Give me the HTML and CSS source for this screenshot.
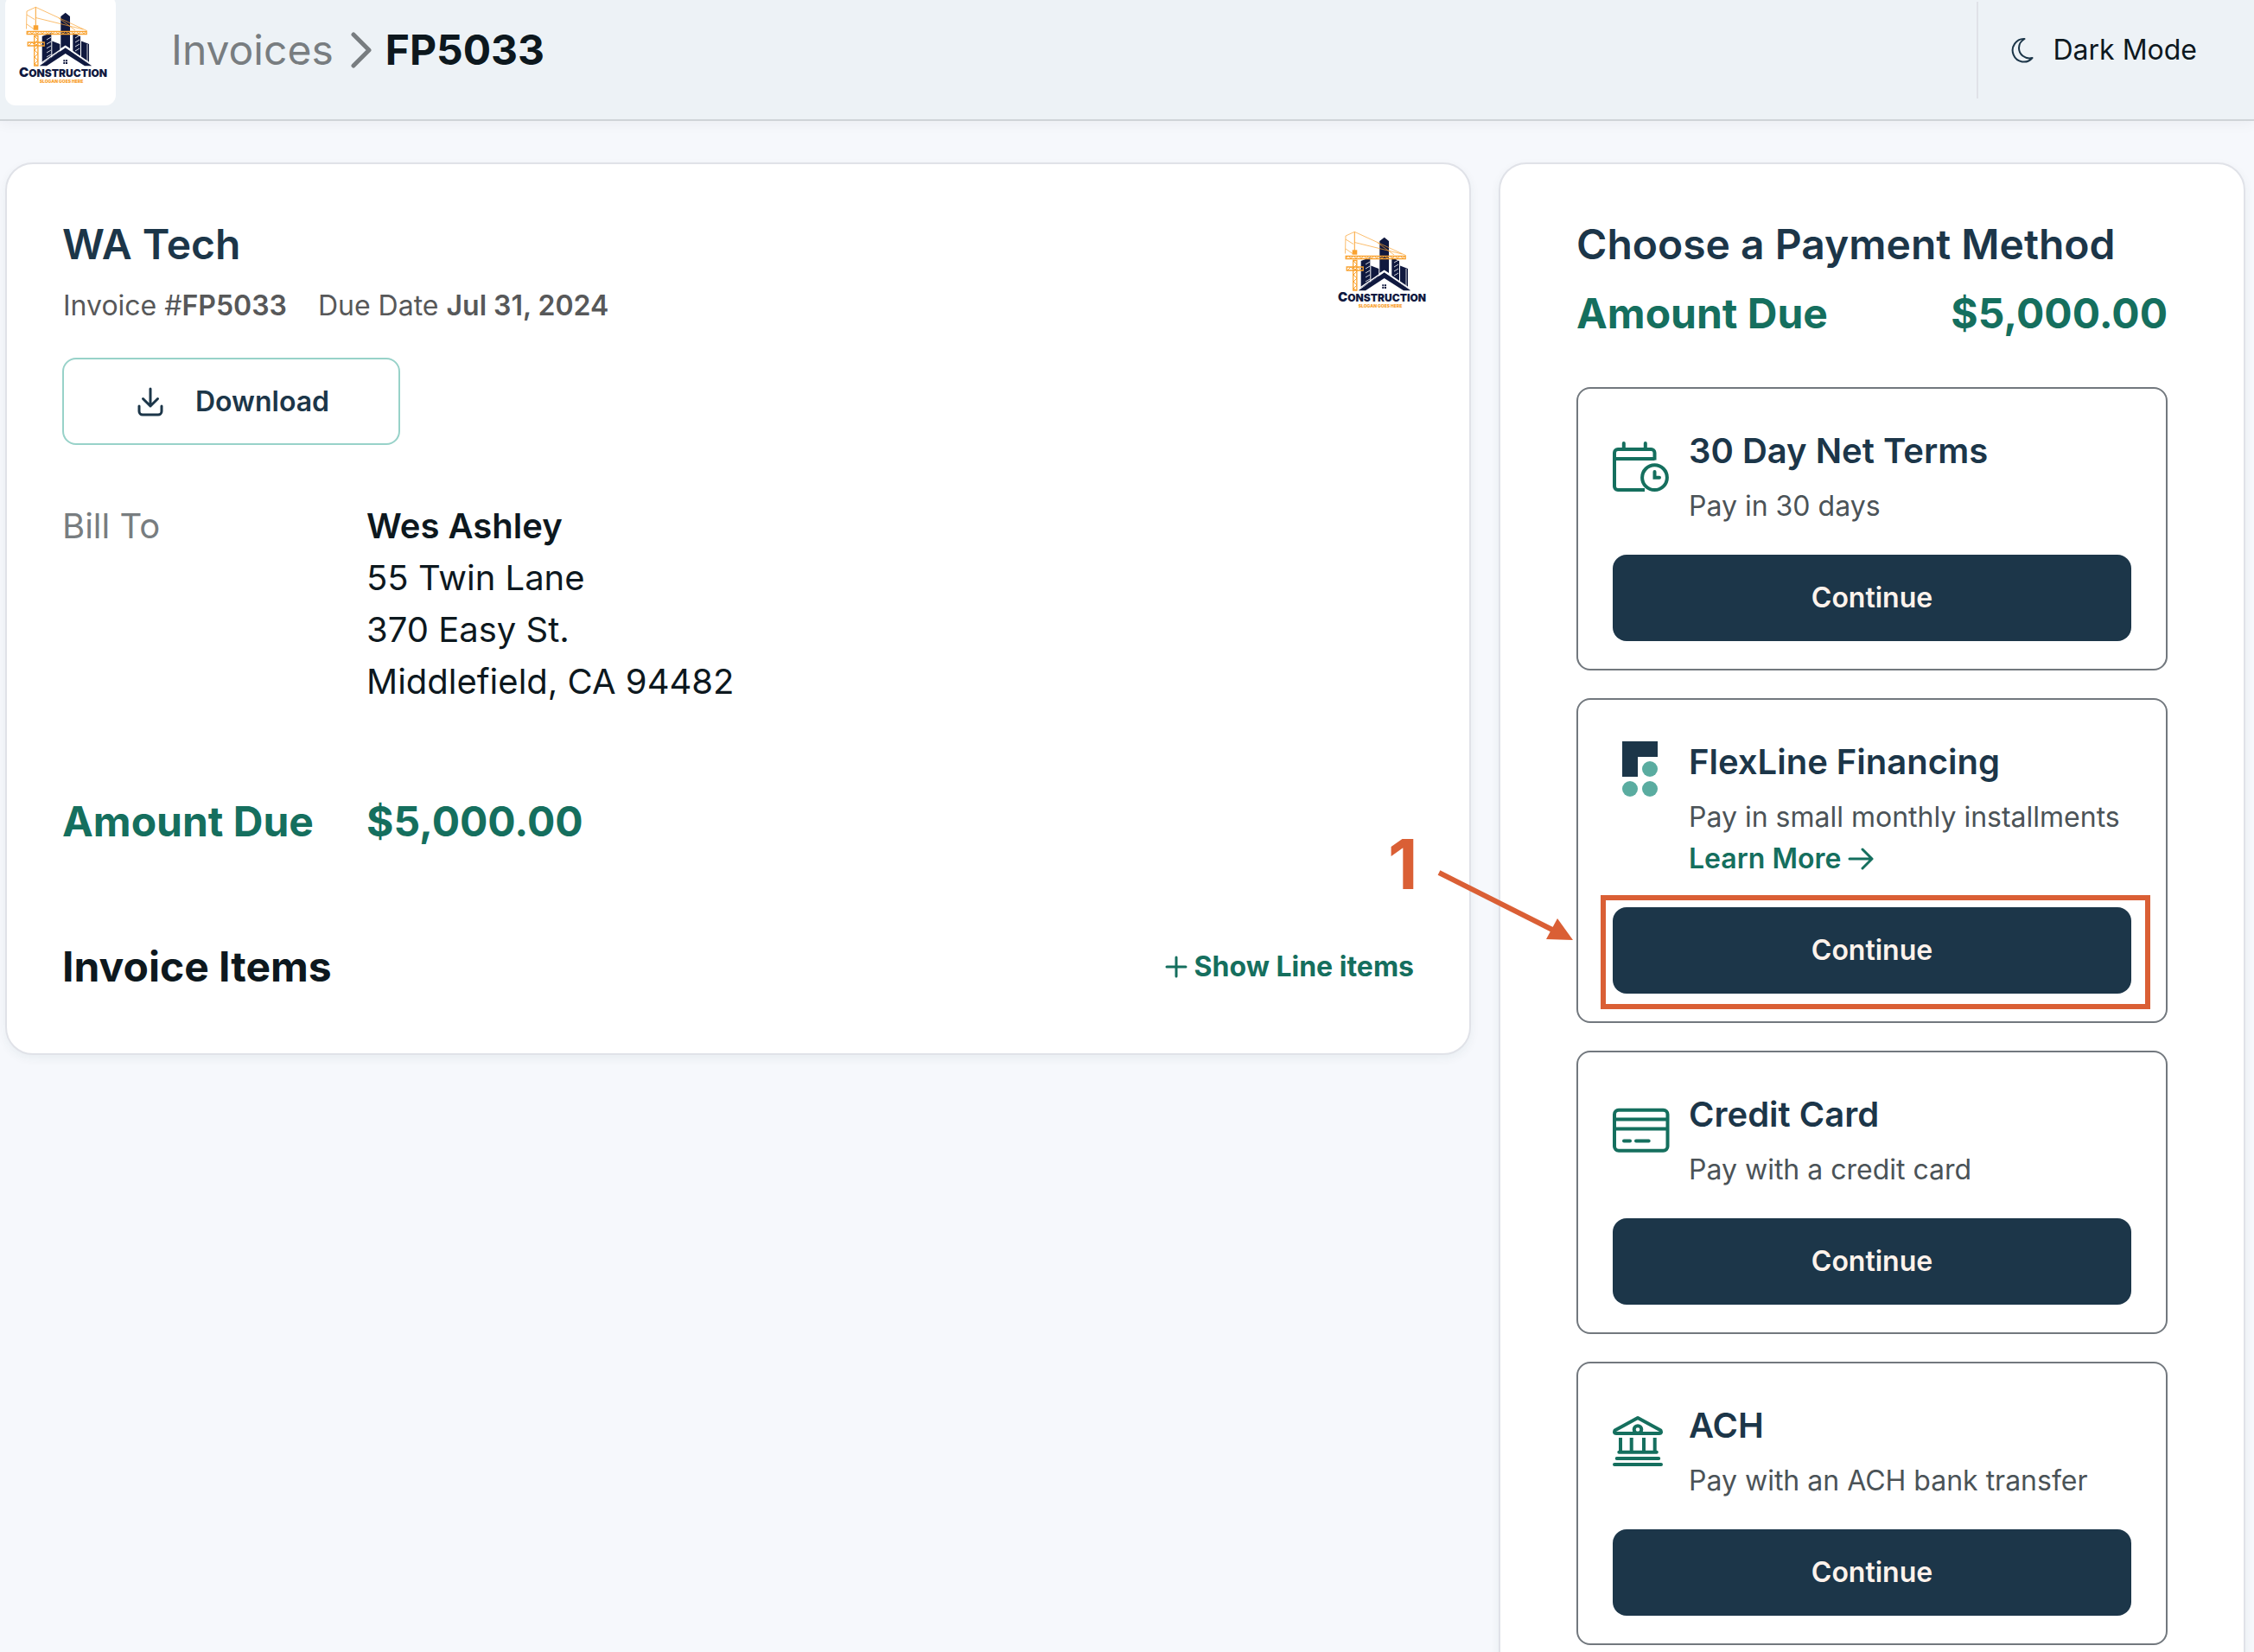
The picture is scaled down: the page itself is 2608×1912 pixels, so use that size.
FILE: index.html
```html
<!DOCTYPE html>
<html lang="en">
<head>
    <meta charset="UTF-8">
    <meta name="viewport" content="width=device-width, initial-scale=1.0">
    <title>Invoice FP5033</title>
    <link rel="stylesheet" href="styles.css">
</head>
<body>
    <header class="header">
        <!-- company logo, the invoice reuses #logo -->
        <svg class="logo header-logo" viewBox="0 0 128 128" role="img" aria-label="Construction">
            <g id="logo">
                <g fill="#10193f">
                    <path d="M42.7 48l10.6-4v29L42.7 79z"/>
                    <path d="M54.3 53.5l9 3.5v9l-9 6z"/>
                    <path d="M64.3 25l5.4-4.3L75 25v37l-5.3-3.5-5.4 3.5z"/>
                    <path d="M78.3 44l8.7 4v24l-8.7-6z"/>
                    <path d="M88 53.5l9 3.5v22l-9-6z"/>
                    <path d="M69.7 61.3l30.6 21H92L69.7 68 48 82.3h-8.3z"/>
                    <path d="M67.3 75.3h2v2h-2zM70 75.3h2v2h-2zM67.3 78h2v2h-2zM70 78h2v2h-2z"/>
                </g>
                <path d="M69.7 59.8L41 79.5M69.7 59.8l28.8 19.7" fill="none" stroke="#fff" stroke-width="1.4"/>
                <path d="M48 52l5-3M48 57l5-3M48 62l5-3M48 67l5-3M48 72l5-3M81 50l5-3M81 55l5-3M81 60l5-3M81 65l5-3M95 57v20" fill="none" stroke="#fff" stroke-width="0.8"/>
                <g fill="none" stroke="#f9a230">
                    <path d="M35.3 14.3V36" stroke-width="1"/>
                    <path d="M24.5 39.5L25 19l10.3-4.7 59.4 27.4M35.3 26.5l55 13.5M62 27l19 14M25 23l9 5.5M25 34l8 5.5" stroke-width="0.7"/>
                    <path d="M25.2 42.5h69v3h-69zM26.2 55h19v4h-19zM33.7 47.5h4.2V82h-4.2z" stroke-width="1.3"/>
                    <path d="M25 45l3-3 3 3 3-3 3 3 3-3 3 3 3-3 3 3 3-3 3 3 3-3 3 3 3-3 3 3 3-3 3 3 3-3 3 3 3-3 3 3 3-3 3 3 3-3" stroke-width="0.8"/>
                    <path d="M34 48l4 4-4 4 4 4-4 4 4 4-4 4 4 4-4 4 4 2M27 59l4-4 4 4 4-4 4 4" stroke-width="1"/>
                </g>
                <path d="M32.7 35.3h5.6v5.4h-5.6z" fill="#f9a230"/>
                <text class="logo-name" x="67" y="94.5" text-anchor="middle"><tspan class="logo-cap">C</tspan>ONSTRUCTION</text>
                <text class="logo-slogan" x="65" y="101.5" text-anchor="middle">SLOGAN GOES HERE</text>
            </g>
        </svg>
        <nav class="breadcrumb">
            <a href="#">Invoices</a>
            <svg width="24" height="42" viewBox="0 0 24 42" fill="none" stroke="#787d80" stroke-width="5" stroke-linecap="round" stroke-linejoin="round"><path d="M3 3l18 18L3 39"/></svg>
            <strong>FP5033</strong>
        </nav>
        <button type="button" class="theme-btn">
            <svg width="26" height="30" viewBox="0 0 26 30" fill="none" stroke="#1c3649" stroke-width="2" stroke-linejoin="round"><path d="M15.5 2A13 13.3 0 1 0 24.5 24C16 26 9 20 9 12.5 9 8 12 4 15.5 2z"/></svg>
            Dark Mode
        </button>
    </header>

    <main class="page">
        <section class="card invoice">
            <div class="invoice-head">
                <div>
                    <h1 class="title">WA Tech</h1>
                    <p class="meta">
                        <span>Invoice #<b>FP5033</b></span>
                        <span>Due Date <b>Jul 31, 2024</b></span>
                    </p>
                </div>
                <svg class="logo invoice-logo" viewBox="0 0 128 128" role="img" aria-label="Construction"><use href="#logo"/></svg>
            </div>
            <button type="button" class="download-btn">
                <svg width="32" height="34" viewBox="0 0 32 34" fill="none" stroke="#1c3649" stroke-width="3" stroke-linecap="round" stroke-linejoin="round"><path d="M16 2v20M7.5 13.5L16 22l8.5-8.5M3 22v6a4 4 0 0 0 4 4h18a4 4 0 0 0 4-4v-6"/></svg>
                Download
            </button>
            <div class="row bill-to">
                <span class="label">Bill To</span>
                <address>
                    <b>Wes Ashley</b><br>
                    55 Twin Lane<br>
                    370 Easy St.<br>
                    Middlefield, CA 94482
                </address>
            </div>
            <div class="row amount invoice-amount">
                <span>Amount Due</span>
                <span>$5,000.00</span>
            </div>
            <div class="items">
                <h2>Invoice Items</h2>
                <button type="button" class="link-btn">
                    <svg width="26" height="26" viewBox="0 0 26 26" fill="none" stroke="#156f5e" stroke-width="3" stroke-linecap="round"><path d="M13 2v22M2 13h22"/></svg>
                    Show Line items
                </button>
            </div>
        </section>

        <aside class="card payment">
            <h2 class="title">Choose a Payment Method</h2>
            <div class="amount payment-amount">
                <span>Amount Due</span>
                <span>$5,000.00</span>
            </div>

            <div class="methods">
                <div class="method">
                    <div class="method-info">
                        <svg class="method-icon" viewBox="0 0 68 72">
                            <path d="M37 69H6a4 4 0 0 1-4-4V26a4 4 0 0 1 4-4h38.5a4 4 0 0 1 4 4v8.5M2 33h46.5"/>
                            <path d="M12.8 22v-7M37.8 22v-7" stroke-linecap="round"/>
                            <circle cx="48.5" cy="54.7" r="14.4"/>
                            <path d="M48.5 48v6.7H54" stroke-linecap="round"/>
                        </svg>
                        <div>
                            <h3>30 Day Net Terms</h3>
                            <p>Pay in 30 days</p>
                        </div>
                    </div>
                    <button type="button" class="continue-btn">Continue</button>
                </div>

                <div class="method">
                    <div class="method-info">
                        <svg class="method-icon" viewBox="0 0 68 72">
                            <path d="M11 0h41v18H29v23H11z" fill="#1c3649" stroke="none"/>
                            <g fill="#5aaca0" stroke="none">
                                <circle cx="43" cy="32" r="9"/>
                                <circle cx="20" cy="55" r="9"/>
                                <circle cx="43" cy="55" r="9"/>
                            </g>
                        </svg>
                        <div>
                            <h3>FlexLine Financing</h3>
                            <p>Pay in small monthly installments</p>
                            <a href="#" class="learn-more">Learn More
                                <svg width="30" height="26" viewBox="0 0 30 26" fill="none" stroke="#156f5e" stroke-width="3" stroke-linecap="round" stroke-linejoin="round"><path d="M2 13h26M17 2l11 11-11 11"/></svg>
                            </a>
                        </div>
                    </div>
                    <div class="callout">
                        <button type="button" class="continue-btn">Continue</button>
                        <span class="callout-box"></span>
                        <svg class="callout-arrow" viewBox="0 0 160 84">
                            <path d="M3 4L136 71" stroke="#da5f35" stroke-width="6"/>
                            <path d="M158 82l-31-1 13-24z" fill="#da5f35"/>
                        </svg>
                        <span class="callout-number">1</span>
                    </div>
                </div>

                <div class="method">
                    <div class="method-info">
                        <svg class="method-icon" viewBox="0 0 68 72">
                            <rect x="2" y="18.7" width="61.5" height="47" rx="5"/>
                            <path d="M2 29.5h61.5M2 40.5h61.5"/>
                            <path d="M13 54.5h7M27 54.5h14.7" stroke-linecap="round"/>
                        </svg>
                        <div>
                            <h3>Credit Card</h3>
                            <p>Pay with a credit card</p>
                        </div>
                    </div>
                    <button type="button" class="continue-btn">Continue</button>
                </div>

                <div class="method">
                    <div class="method-info">
                        <svg class="method-icon" viewBox="0 0 68 72" stroke-linecap="round" stroke-linejoin="round">
                            <path d="M29 15L2.5 29.5Q1 33 4 33h50q3 0 1.5-3.5z"/>
                            <circle cx="29" cy="28.5" r="4.3"/>
                            <path d="M9 38v16M21.7 38v16M36 38v16M48.7 38v16" stroke-linecap="butt"/>
                            <path d="M7.3 54.7h43.5M4.7 62h48.5M2 69h54"/>
                        </svg>
                        <div>
                            <h3>ACH</h3>
                            <p>Pay with an ACH bank transfer</p>
                        </div>
                    </div>
                    <button type="button" class="continue-btn">Continue</button>
                </div>
            </div>
        </aside>
    </main>
</body>
</html>
```

FILE: styles.css
```css
* {
    box-sizing: border-box;
}

body {
    margin: 0;
    background-color: #f6f8fc;
    color: #0d181e;
    font-family: Inter, "Liberation Sans", sans-serif;
    font-size: 32px;
    line-height: 48px;
}

h1, h2, h3, p {
    margin: 0;
}

button {
    font: inherit;
    color: inherit;
    cursor: pointer;
}

a {
    color: inherit;
    text-decoration: none;
}

svg {
    flex-shrink: 0;
}

.logo {
    width: 128px;
    height: 128px;
}

.logo-name {
    font-size: 12px;
    font-weight: 900;
    fill: #10193f;
}

.logo-cap {
    font-size: 15px;
}

.logo-slogan {
    font-size: 5px;
    font-weight: 900;
    fill: #f9a230;
}

/* header */
.header {
    display: flex;
    align-items: center;
    padding: 0 46px 22px 6px;
    background-color: #edf2f6;
    border-bottom: 2px solid #cfd4d8;
    box-shadow: 0 2px 16px rgba(30, 30, 50, 0.06);
}

.header-logo {
    margin: -6px 0;
    background-color: #fff;
    border-radius: 12px;
}

.breadcrumb {
    display: flex;
    align-items: center;
    margin-left: 64px;
    font-size: 48px;
    line-height: 72px;
}

.breadcrumb a {
    color: #787d80;
}

.breadcrumb svg {
    margin: 0 16px 0 20px;
}

.breadcrumb strong {
    font-weight: 700;
}

.theme-btn {
    display: flex;
    align-items: center;
    gap: 22px;
    height: 112px;
    margin: 2px 0 2px auto;
    padding: 0 20px 0 38px;
    background: none;
    border: none;
    border-left: 2px solid #e0e2e8;
}

/* layout */
.page {
    display: grid;
    grid-template-columns: 1fr 33.333%;
    align-items: start;
    gap: 32px;
    padding: 48px 10px 48px 6px;
    overflow: hidden;
}

.card {
    background-color: #fff;
    border: 2px solid #e0e2e8;
    border-radius: 32px;
    box-shadow: 0 4px 12px rgba(20, 60, 70, 0.06);
}

.title {
    color: #1c3649;
    font-size: 48px;
    font-weight: 600;
    line-height: 72px;
}

.amount {
    color: #156f5e;
    font-size: 48px;
    font-weight: 700;
    line-height: 72px;
}

/* invoice */
.invoice {
    padding: 57px 64px 64px;
}

.invoice-head {
    display: flex;
    justify-content: space-between;
}

.invoice-logo {
    margin: 7px -24px -7px 0;
}

.meta {
    display: flex;
    gap: 36px;
    margin-top: 11px;
    padding-left: 1px;
    color: #575859;
}

.meta b {
    font-weight: 600;
}

.download-btn {
    display: flex;
    justify-content: center;
    align-items: center;
    gap: 36px;
    width: 391px;
    height: 101px;
    margin-top: 36px;
    padding: 0 0 0 4px;
    background-color: #fff;
    border: 2px solid #98d2c9;
    border-radius: 16px;
    color: #1c3649;
    font-weight: 600;
}

.row {
    display: grid;
    grid-template-columns: 352px 1fr;
}

.bill-to {
    margin-top: 64px;
    font-size: 40px;
    line-height: 60px;
}

.bill-to .label {
    color: #787d80;
}

.bill-to address {
    font-style: normal;
}

.bill-to b {
    font-weight: 600;
}

.invoice-amount {
    margin-top: 96px;
}

.items {
    display: flex;
    justify-content: space-between;
    align-items: center;
    margin-top: 96px;
}

.items h2 {
    font-size: 48px;
    font-weight: 700;
    line-height: 72px;
}

.link-btn {
    display: flex;
    align-items: center;
    gap: 8px;
    padding: 0;
    background: none;
    border: none;
    color: #156f5e;
    font-weight: 700;
}

/* payment methods */
.payment {
    padding: 57px 88px 64px;
}

.payment-amount {
    display: flex;
    justify-content: space-between;
    margin-top: 8px;
}

.methods {
    display: flex;
    flex-direction: column;
    gap: 32px;
    margin-top: 49px;
}

.method {
    padding: 40px 40px 32px;
    border: 2px solid #72787e;
    border-radius: 16px;
}

.method-info {
    display: flex;
    gap: 20px;
    margin-bottom: 32px;
}

.method-icon {
    width: 68px;
    height: 72px;
    margin-top: 8px;
    fill: none;
    stroke: #156f5e;
    stroke-width: 4;
}

.method h3 {
    margin-bottom: 8px;
    color: #1c3649;
    font-size: 40px;
    font-weight: 600;
    line-height: 64px;
}

.method p {
    color: #4b5357;
    white-space: nowrap;
}

.learn-more {
    display: flex;
    align-items: center;
    gap: 8px;
    color: #156f5e;
    font-weight: 600;
}

.continue-btn {
    display: block;
    width: 100%;
    height: 100px;
    background-color: #1c3649;
    border: none;
    border-radius: 16px;
    color: #fff3ec;
    font-weight: 600;
}

/* numbered pointer over the FlexLine button */
.callout {
    position: relative;
}

.callout-box {
    position: absolute;
    inset: -14px -22px -18px -14px;
    border: 6px solid #da5f35;
    pointer-events: none;
}

.callout-arrow {
    position: absolute;
    top: -44px;
    left: -204px;
    width: 160px;
    height: 84px;
}

.callout-number {
    position: absolute;
    top: -90px;
    left: -260px;
    color: #da5f35;
    font-size: 80px;
    font-weight: 700;
    line-height: 80px;
}
```
